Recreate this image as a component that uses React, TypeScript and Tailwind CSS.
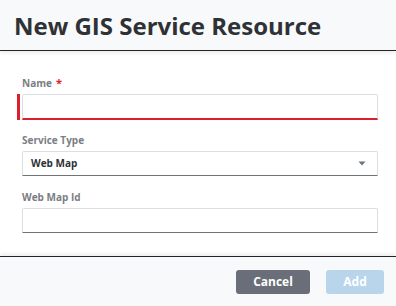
import React from "react";

function Label({ children, required }: { children: React.ReactNode; required?: boolean }) {
  return (
    <div className="h-[14px] text-[10px] leading-[14px] font-bold text-[#7a7e83] flex items-center gap-[4px]">
      <span>{children}</span>
      {required && <span className="text-[#dc1e2d] text-[11px]">*</span>}
    </div>
  );
}

export default function App() {
  return (
    <div
      className="w-[396px] h-[306px] bg-white flex flex-col overflow-hidden"
      style={{ fontFamily: '"Open Sans", "Noto Sans", sans-serif' }}
    >
      <div className="h-[51px] shrink-0 bg-[#f8f9fa] border-b border-[#212529] flex items-center pl-[14px] shadow-[0_2px_4px_rgba(0,0,0,0.08)] relative z-10">
        <h1 className="text-[24px] font-bold text-[#2e3236] leading-none mt-[2px]">
          New GIS Service Resource
        </h1>
      </div>

      <div className="flex-1 pt-[25px] pl-[22px] pr-[18px] flex flex-col">
        <Label required>Name</Label>
        <div className="mt-[4px] -ml-[5px] flex gap-[2px]">
          <div className="w-[3px] bg-[#dc1e2d]" />
          <div className="flex-1 h-[26px] border border-[#dcdfe2] border-b-2 border-b-[#dc1e2d] rounded-t-[2px] bg-white" />
        </div>

        <div className="mt-[13px]">
          <Label>Service Type</Label>
        </div>
        <div className="mt-[4px] h-[25px] border border-[#dcdfe2] border-b-[#6f7479] rounded-t-[2px] bg-white flex items-center justify-between pl-[8px] pr-[11px]">
          <span className="text-[10px] font-bold text-[#2e3236]">Web Map</span>
          <svg width="8" height="5" viewBox="0 0 8 5">
            <path d="M0.5 0.5 L7.5 0.5 L4 4.5 Z" fill="#6f7479" />
          </svg>
        </div>

        <div className="mt-[14px]">
          <Label>Web Map Id</Label>
        </div>
        <div className="mt-[4px] h-[25px] border border-[#dcdfe2] border-b-[#6f7479] rounded-t-[2px] bg-white" />
      </div>

      <div className="h-[50px] shrink-0 bg-[#f8f9fa] border-t border-[#212529] flex items-center justify-end gap-[16px] pr-[12px] shadow-[0_-2px_4px_rgba(0,0,0,0.08)] relative z-10">
        <button className="w-[74px] h-[24px] rounded-[3px] bg-[#696e78] text-white text-[12px] font-bold">
          Cancel
        </button>
        <button className="w-[58px] h-[24px] rounded-[3px] bg-[#b8d5eb] text-white text-[12px] font-bold">
          Add
        </button>
      </div>
    </div>
  );
}
